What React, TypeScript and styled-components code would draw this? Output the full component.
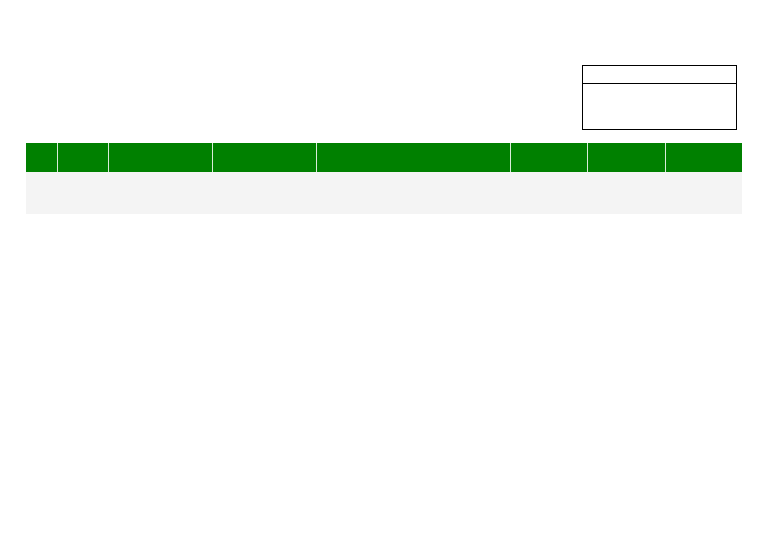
import React from "react";
import { styled, createGlobalStyle } from "styled-components";

const columns = [31, 51, 104, 104, 194, 77, 78, 77];

const App = () => {
  return (
    <>
      <GlobalStyle />
      <StPage.Body>
        <StPage.TopRow>
          <StPage.InfoBox>
            <StPage.InfoHead />
            <StPage.InfoBody />
          </StPage.InfoBox>
        </StPage.TopRow>
        <StPage.Table>
          <colgroup>
            {columns.map((w, i) => (
              <col key={i} style={{ width: w }} />
            ))}
          </colgroup>
          <thead>
            <tr>
              {columns.map((_, i) => (
                <StPage.HeadCell key={i} />
              ))}
            </tr>
          </thead>
          <tbody>
            <tr>
              <StPage.BodyCell colSpan={columns.length} />
            </tr>
          </tbody>
        </StPage.Table>
      </StPage.Body>
    </>
  );
};

export default App;

const GlobalStyle = createGlobalStyle`
  html, body {
    margin: 0;
    padding: 0;
    background: #fff;
    font-family: "Liberation Sans", Arial, sans-serif;
  }
`;

const StPage = {
  Body: styled.div`
    width: 768px;
    box-sizing: border-box;
    padding: 65px 26px 0 26px;
  `,
  TopRow: styled.div`
    display: flex;
    justify-content: flex-end;
    padding-right: 5px;
    margin-bottom: 13px;
  `,
  InfoBox: styled.div`
    width: 155px;
    height: 65px;
    box-sizing: border-box;
    border: 1px solid #000;
    display: flex;
    flex-direction: column;
  `,
  InfoHead: styled.div`
    height: 17px;
    border-bottom: 1px solid #000;
  `,
  InfoBody: styled.div`
    flex: 1;
  `,
  Table: styled.table`
    width: 716px;
    border-collapse: collapse;
    table-layout: fixed;
  `,
  HeadCell: styled.th`
    height: 29px;
    padding: 0;
    background: #008000;
    border-left: 1px solid #d8ecd8;
    box-sizing: border-box;
    &:first-child {
      border-left: none;
    }
  `,
  BodyCell: styled.td`
    height: 42px;
    padding: 0;
    background: #f4f4f4;
  `,
};
